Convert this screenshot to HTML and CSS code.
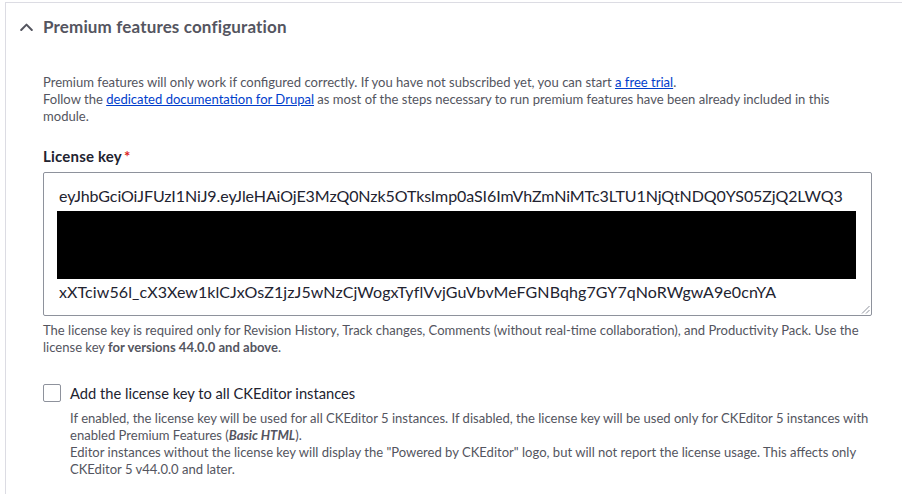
FILE: index.html
```html
<!DOCTYPE html>
<html lang="en">
<head>
<meta charset="utf-8">
<title>Premium features configuration</title>
<link rel="stylesheet" href="styles.css">
</head>
<body>
<div class="details">
  <div class="summary">
    <svg class="chevron" width="13" height="8" viewBox="0 0 13 8" aria-hidden="true"><polyline points="1.2,7 6.5,1.6 11.8,7" fill="none" stroke="#54555f" stroke-width="2" stroke-linecap="round" stroke-linejoin="round"/></svg>
    <span class="summary-title">Premium features configuration</span>
  </div>
  <div class="content">
    <p class="intro">Premium features will only work if configured correctly. If you have not subscribed yet, you can start <a href="#">a free trial</a>.<br>Follow the <a href="#">dedicated documentation for Drupal</a> as most of the steps necessary to run premium features have been already included in this module.</p>

    <div class="form-item">
      <div class="label">License key<span class="req">*</span></div>
      <div class="key-box">
        <div class="key-line key-first">eyJhbGciOiJFUzI1NiJ9.eyJleHAiOjE3MzQ0Nzk5OTksImp0aSI6ImVhZmNiMTc3LTU1NjQtNDQ0YS05ZjQ2LWQ3</div>
        <div class="redact"></div>
        <div class="key-line key-last">xXTciw56l_cX3Xew1klCJxOsZ1jzJ5wNzCjWogxTyflVvjGuVbvMeFGNBqhg7GY7qNoRWgwA9e0cnYA</div>
        <svg class="grip" width="9" height="9" viewBox="0 0 9 9" aria-hidden="true"><line x1="8.5" y1="1" x2="1" y2="8.5" stroke="#8e929c" stroke-width="1"/><line x1="8.5" y1="5" x2="5" y2="8.5" stroke="#8e929c" stroke-width="1"/></svg>
      </div>
      <div class="desc desc-key">The license key is required only for Revision History, Track changes, Comments (without real-time collaboration), and Productivity Pack. Use the license key <strong>for versions 44.0.0 and above</strong>.</div>
    </div>

    <div class="check-item">
      <div class="check-row">
        <span class="checkbox"></span>
        <span class="check-label">Add the license key to all CKEditor instances</span>
      </div>
      <div class="desc desc-check">If enabled, the license key will be used for all CKEditor 5 instances. If disabled, the license key will be used only for CKEditor 5 instances with enabled Premium Features (<em>Basic HTML</em>).<br>Editor instances without the license key will display the "Powered by CKEditor" logo, but will not report the license usage. This affects only CKEditor 5 v44.0.0 and later.</div>
    </div>
  </div>
</div>
</body>
</html>
```

FILE: styles.css
```css
html, body {
  margin: 0;
  padding: 0;
  background: #ffffff;
}

body {
  font-family: Lato, "Liberation Sans", sans-serif;
  color: #222330;
  overflow: hidden;
}

.details {
  margin: 2px 0 0 5px;
  border-top: 1px solid #dcdce3;
  border-left: 1px solid #dcdce3;
  height: calc(100vh - 3px);
  overflow: hidden;
}

.summary {
  display: flex;
  align-items: flex-start;
  padding: 12px 0 14px 14px;
  height: 24px;
}

.chevron {
  display: block;
  margin: 8px 10px 0 0;
}

.summary-title {
  font-size: 17px;
  line-height: 24px;
  font-weight: 700;
  letter-spacing: 0.15px;
  color: #545560;
}

.content {
  padding: 21px 30px 0 37px;
}

.intro {
  margin: 0;
  font-size: 13.05px;
  line-height: 17px;
  color: #545560;
}

a {
  color: #003ecc;
  text-decoration: underline;
}

.form-item {
  margin-top: 22px;
}

.label {
  font-size: 15px;
  line-height: 18px;
  font-weight: 700;
  letter-spacing: 0.2px;
  color: #222330;
  margin-bottom: 7px;
}

.req {
  color: #dc2323;
  margin-left: 2px;
}

.key-box {
  position: relative;
  border: 1px solid #8e929c;
  border-radius: 2px;
  padding: 11px 15px;
  height: 120px;
}

.key-line {
  font-size: 16px;
  line-height: 24px;
  white-space: nowrap;
  overflow: hidden;
  color: #222330;
}

.key-first {
  letter-spacing: -0.08px;
}

.key-last {
  letter-spacing: 0.09px;
}

.redact {
  height: 68px;
  margin: 3px 0 1px -2px;
  background: #000000;
}

.grip {
  position: absolute;
  right: 1px;
  bottom: 1px;
}

.desc {
  font-size: 13.05px;
  line-height: 17px;
  color: #545560;
  margin-right: -4px;
}

.desc-key {
  margin-top: 6px;
}

.check-item {
  margin-top: 28px;
}

.check-row {
  display: flex;
  align-items: center;
  height: 18px;
}

.checkbox {
  display: block;
  box-sizing: border-box;
  width: 18px;
  height: 18px;
  border: 1px solid #8e929c;
  border-radius: 2px;
  margin-right: 9px;
}

.check-label {
  font-size: 14.7px;
  line-height: 18px;
  color: #222330;
}

.desc-check {
  margin: 8px -4px 0 27px;
}

.desc-check em {
  font-weight: 700;
}
```
